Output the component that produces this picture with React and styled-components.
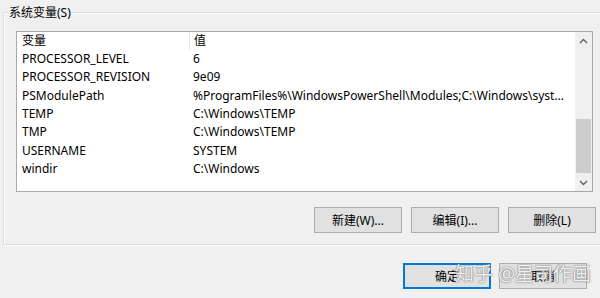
import React from 'react';
import styled, { createGlobalStyle } from 'styled-components';

const GlobalStyle = createGlobalStyle`
  html, body {
    margin: 0;
    padding: 0;
    background: #f0f0f0;
    overflow: hidden;
  }
  body {
    font-family: "Noto Sans", "Noto Sans CJK SC", sans-serif;
    font-size: 12px;
    color: #000;
  }
`;

const Page = styled.div`
  width: 600px;
  height: 298px;
  padding-top: 12px;
  box-sizing: border-box;
  position: relative;
`;

const GroupBox = styled.div`
  margin-left: 3px;
  height: 233px;
  box-sizing: border-box;
  border: 1px solid #dcdcdc;
  border-right: none;
  box-shadow: inset 1px 1px 0 #fff, 0 1px 0 #fff;
  padding-left: 12px;
`;

const GroupLabel = styled.div`
  display: inline-block;
  margin: -8px 0 0 -8px;
  padding: 0 1px;
  background: #f0f0f0;
  line-height: 16px;
  vertical-align: top;
`;

const ListBox = styled.div`
  margin-top: 1px;
  width: 577px;
  height: 161px;
  box-sizing: border-box;
  border: 1px solid #a9a9a9;
  background: #fff;
  display: flex;
`;

const Table = styled.div`
  flex: 1;
  min-width: 0;
`;

const Row = styled.div`
  display: grid;
  grid-template-columns: 172px 1fr;
  height: ${p => (p.$header ? 18 : 18.33)}px;
  line-height: ${p => (p.$header ? 18 : 18.33)}px;
  white-space: nowrap;
`;

const Cell = styled.div`
  padding-left: ${p => (p.$value ? 4 : 5)}px;
  padding-right: 6px;
  overflow: hidden;
  text-overflow: ellipsis;
  border-left: ${p => (p.$divider ? '1px solid #e5e5e5' : 'none')};
`;

const ScrollBar = styled.div`
  width: 17px;
  background: #f0f0f0;
  display: flex;
  flex-direction: column;
`;

const ScrollArrow = styled.div`
  height: 17px;
  display: flex;
  align-items: center;
  justify-content: center;
`;

const ScrollTrack = styled.div`
  flex: 1;
  display: flex;
  flex-direction: column;
  justify-content: flex-end;
  padding: 0 1px 1px;
`;

const ScrollThumb = styled.div`
  height: 54px;
  background: #cdcdcd;
`;

const ButtonRow = styled.div`
  display: flex;
  justify-content: flex-end;
  gap: ${p => p.$gap}px;
  padding-right: ${p => p.$right}px;
  margin-top: ${p => p.$top}px;
`;

const Button = styled.button`
  width: 88px;
  height: 26px;
  box-sizing: border-box;
  background: #e1e1e1;
  border: ${p => (p.$default ? '2px solid #0078d7' : '1px solid #adadad')};
  font-family: inherit;
  font-size: 12px;
  color: #000;
  padding: 0;
  margin: 0;
`;

const Watermark = styled.div`
  position: absolute;
  left: 455px;
  top: 259px;
  font-size: 19px;
  color: rgba(255, 255, 255, 0.9);
  text-shadow: 0 0 1px #888, 0 0 1px #888, 0 0 2px #999;
  white-space: nowrap;
  pointer-events: none;
`;

const Chevron = ({ up }) => (
  <svg width="9" height="6" viewBox="0 0 9 6">
    <path
      d={up ? 'M1 5 L4.5 1.5 L8 5' : 'M1 1 L4.5 4.5 L8 1'}
      fill="none"
      stroke="#606060"
      strokeWidth="1.4"
    />
  </svg>
);

const rows = [
  ['PROCESSOR_LEVEL', '6'],
  ['PROCESSOR_REVISION', '9e09'],
  ['PSModulePath', '%ProgramFiles%\\WindowsPowerShell\\Modules;C:\\Windows\\system32\\WindowsPowerShell\\v1.0\\Modules'],
  ['TEMP', 'C:\\Windows\\TEMP'],
  ['TMP', 'C:\\Windows\\TEMP'],
  ['USERNAME', 'SYSTEM'],
  ['windir', 'C:\\Windows'],
];

export default function App() {
  return (
    <>
      <GlobalStyle />
      <Page>
        <GroupBox>
          <GroupLabel>系统变量(S)</GroupLabel>
          <ListBox>
            <Table>
              <Row $header>
                <Cell>变量</Cell>
                <Cell $value $divider>值</Cell>
              </Row>
              {rows.map(([name, value]) => (
                <Row key={name}>
                  <Cell>{name}</Cell>
                  <Cell $value>{value}</Cell>
                </Row>
              ))}
            </Table>
            <ScrollBar>
              <ScrollArrow><Chevron up /></ScrollArrow>
              <ScrollTrack><ScrollThumb /></ScrollTrack>
              <ScrollArrow><Chevron /></ScrollArrow>
            </ScrollBar>
          </ListBox>
          <ButtonRow $gap={9} $right={4} $top={15}>
            <Button>新建(W)...</Button>
            <Button>编辑(I)...</Button>
            <Button>删除(L)</Button>
          </ButtonRow>
        </GroupBox>
        <ButtonRow $gap={8} $right={13} $top={18}>
          <Button $default>确定</Button>
          <Button>取消</Button>
        </ButtonRow>
        <Watermark>知乎 @星司作画</Watermark>
      </Page>
    </>
  );
}
